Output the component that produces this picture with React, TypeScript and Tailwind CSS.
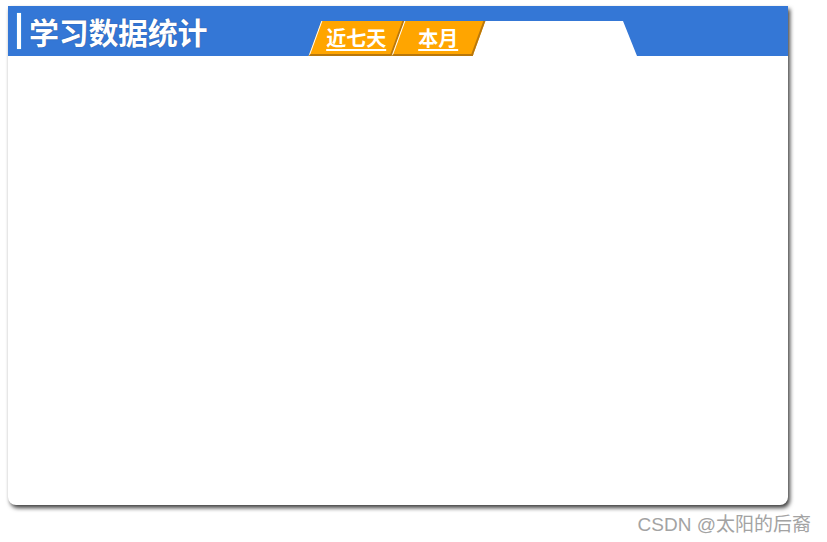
export default function App() {
  return (
    <div className="min-h-screen bg-white pt-[6px] pl-[8px] font-['Noto_Sans_CJK_SC',sans-serif]">
      <div className="w-[780px] h-[499px] bg-white rounded-b-[8px] shadow-[2px_3px_4px_rgba(0,0,0,0.75)] overflow-hidden">
        {/* header */}
        <div className="flex h-[50px] bg-[#3477d6]">
          <div className="flex items-center w-[307px] pl-[9px]">
            <span className="w-[4px] h-[36px] bg-white shadow-[0_0_1px_#7ff]" />
            <h2 className="ml-[8px] text-[30px] leading-none font-bold text-white tracking-[-0.3px] [text-shadow:0_0_1px_rgba(0,0,40,0.5)]">
              学习数据统计
            </h2>
          </div>
          <div className="flex self-end h-[35px]">
            <button className="relative z-10 w-[83px] h-full bg-[#ffa500] -skew-x-[20deg] border-l border-white border-r-2 border-b-2 border-r-[#b8770c] border-b-[#b8770c]">
              <span className="block skew-x-[20deg] text-[20px] leading-none font-bold text-white underline underline-offset-[3px] decoration-2">
                近七天
              </span>
            </button>
            <button className="relative z-10 w-[81px] h-full bg-[#ffa500] -skew-x-[20deg] border-l border-white border-r-2 border-b-2 border-r-[#b8770c] border-b-[#b8770c]">
              <span className="block skew-x-[20deg] text-[20px] leading-none font-bold text-white underline underline-offset-[3px] decoration-2">
                本月
              </span>
            </button>
            <div className="ml-[-9px] w-[167px] h-full bg-white [clip-path:polygon(0_0,153px_0,167px_100%,0_100%)]" />
          </div>
        </div>
      </div>
      <div className="flex justify-end pr-[16px] mt-[8px]">
        <span className="text-[19px] leading-[24px] text-[#a3a3a3] font-['Liberation_Sans','Noto_Sans_CJK_SC',sans-serif]">
          CSDN @太阳的后裔
        </span>
      </div>
    </div>
  )
}
